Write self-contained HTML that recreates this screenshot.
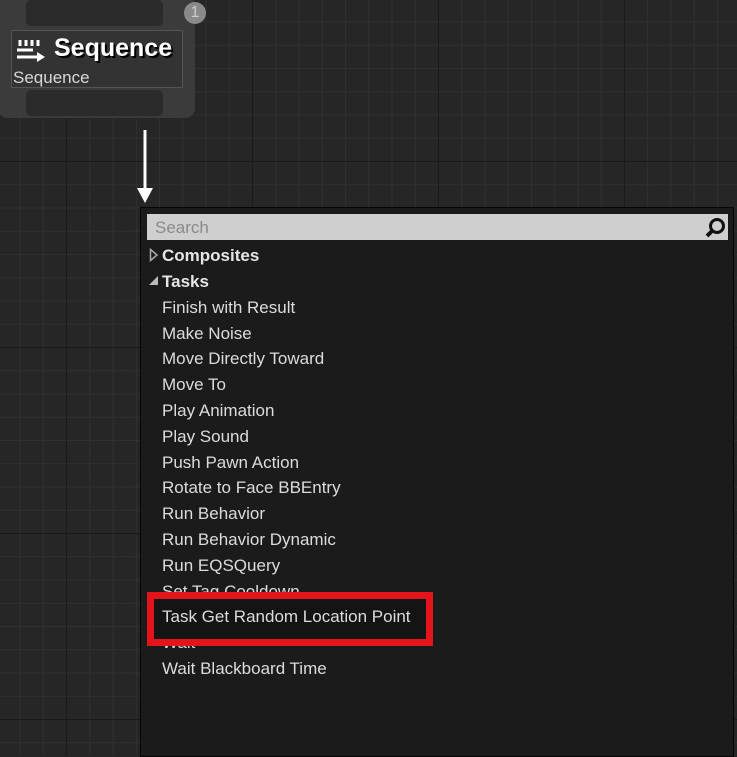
<!DOCTYPE html>
<html><head><style>
html,body{margin:0;padding:0}
body{width:737px;height:755px;position:relative;overflow:hidden;background:#262626;font-family:"Liberation Sans","DejaVu Sans",sans-serif;}
.grid{position:absolute;inset:0;
background-image:
linear-gradient(90deg,#1a1a1a 0,#1a1a1a 1px,transparent 1px),
linear-gradient(0deg,#1a1a1a 0,#1a1a1a 1px,transparent 1px),
linear-gradient(90deg,#303030 0,#303030 1px,transparent 1px),
linear-gradient(0deg,#303030 0,#303030 1px,transparent 1px);
background-size:186px 186px,186px 186px,23.25px 23.25px,23.25px 23.25px;
background-position:66px 0,0 162px,19.5px 0,0 22.5px;}
.node{position:absolute;left:-2px;top:-6px;width:197px;height:124px;background:#3b3b3b;border-radius:10px;}
.pin{position:absolute;left:28px;width:137px;height:26px;background:#2b2b2b;border-radius:5px}
.title{position:absolute;left:11px;top:30px;width:172px;height:58px;background:#333;border:1px solid #555;box-sizing:border-box}
.badge{position:absolute;left:184px;top:2px;width:22px;height:22px;border-radius:50%;background:#8a8a8a;color:#ccc;font-size:16px;text-align:center;line-height:22px}
.panel{position:absolute;left:140px;top:207px;width:594px;height:550px;background:#1b1b1b;border:1px solid #050505;box-sizing:border-box}
.search{position:absolute;left:147px;top:214px;width:581px;height:26px;background:#cfcfcf;color:#8a8a8a;font-size:17px;line-height:28px;box-sizing:border-box;padding-left:8px}
.it{position:absolute;left:162px;color:#dcdcdc;font-size:17px;line-height:22px}
.b{font-weight:bold;color:#e6e6e6}
</style></head><body>
<div class="grid"></div>
<div class="node">
<div class="pin" style="top:6px"></div>
<div class="pin" style="top:96px"></div>
</div>
<div class="title"></div>
<svg style="position:absolute;left:15px;top:38px" width="32" height="24" viewBox="0 0 32 24">
<g stroke="#fff" stroke-width="3" fill="none"><path d="M5 2v6M11 2v6M17 2v6M23 2v6"/><path d="M2 12h16M2 19h24"/></g>
<path d="M22 14l8 5-8 5z" fill="#fff"/></svg>
<div style="position:absolute;left:54px;top:34px;color:#fff;font-size:25px;font-weight:bold;text-shadow:2px 2px 0 #000">Sequence</div>
<div style="position:absolute;left:13px;top:68px;color:#d8d8d8;font-size:17px">Sequence</div>
<div class="badge">1</div>
<svg style="position:absolute;left:136px;top:128px" width="18" height="80"><path d="M9 2v66" stroke="#fff" stroke-width="3"/><path d="M1 60l8 15 8-15z" fill="#fff"/></svg>
<div class="panel"></div>
<div class="search">Search</div>
<svg style="position:absolute;left:704px;top:216px" width="24" height="24"><circle cx="13" cy="10" r="6.5" stroke="#111" stroke-width="3" fill="none"/><path d="M8.5 14.5L3 20" stroke="#111" stroke-width="4"/></svg>
<svg style="position:absolute;left:149px;top:248px" width="12" height="14"><path d="M1.5 1.5L8 7 1.5 12.5z" stroke="#aaa" stroke-width="1.5" fill="none"/></svg>
<div class="it b" style="top:245px">Composites</div>
<svg style="position:absolute;left:148px;top:275px" width="12" height="12"><path d="M1 10h9V1z" fill="#bbb"/></svg>
<div class="it b" style="top:271px">Tasks</div>
<div class="it" style="top:297px">Finish with Result</div>
<div class="it" style="top:323px">Make Noise</div>
<div class="it" style="top:348px">Move Directly Toward</div>
<div class="it" style="top:374px">Move To</div>
<div class="it" style="top:400px">Play Animation</div>
<div class="it" style="top:426px">Play Sound</div>
<div class="it" style="top:452px">Push Pawn Action</div>
<div class="it" style="top:477px">Rotate to Face BBEntry</div>
<div class="it" style="top:503px">Run Behavior</div>
<div class="it" style="top:529px">Run Behavior Dynamic</div>
<div class="it" style="top:555px">Run EQSQuery</div>
<div class="it" style="top:581px">Set Tag Cooldown</div>
<div class="it" style="top:632px">Wait</div>
<div style="position:absolute;left:147px;top:592px;width:286px;height:54px;box-sizing:border-box;border:7px solid #e3141c;background:#141414"></div>
<div class="it" style="top:606px">Task Get Random Location Point</div>
<div class="it" style="top:658px">Wait Blackboard Time</div>
</body></html>
